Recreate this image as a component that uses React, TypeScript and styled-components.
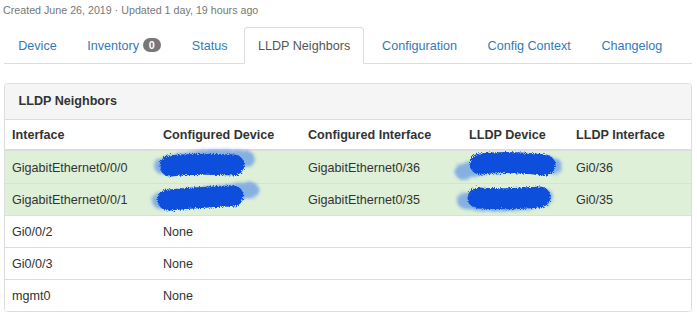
import React, { useId } from 'react';
import styled, { createGlobalStyle } from 'styled-components';

const GlobalStyle = createGlobalStyle`
  body {
    margin: 0;
    background: #fff;
    color: #333;
    font-family: "Liberation Sans", Arial, Helvetica, sans-serif;
    font-size: 12.6px;
  }
`;

const Page = styled.div`
  padding: 2.5px 5px 0 4px;
`;

const Meta = styled.div`
  font-size: 10.7px;
  line-height: 15px;
  color: #777;
  margin: 0 0 9.5px -1px;
`;

const Tabs = styled.ul`
  display: flex;
  list-style: none;
  margin: 0;
  padding: 0;
  border-bottom: 1px solid #ddd;
`;

const TabItem = styled.li`
  margin-bottom: -1px;
`;

const TabLink = styled.a<{ $active?: boolean }>`
  display: block;
  padding: 8.5px 13.2px;
  margin-right: ${p => (p.$active ? '3.5px' : '2.2px')};
  line-height: 18px;
  border: 1px solid transparent;
  border-radius: 3.6px 3.6px 0 0;
  text-decoration: none;
  cursor: pointer;
  color: ${p => (p.$active ? '#555' : '#337ab7')};
  background: ${p => (p.$active ? '#fff' : 'transparent')};
  border-color: ${p => (p.$active ? '#ddd #ddd transparent' : 'transparent')};
`;

const Badge = styled.span`
  display: inline-block;
  min-width: 6px;
  padding: 1.8px 6.3px;
  font-size: 10.8px;
  font-weight: bold;
  line-height: 1;
  color: #fff;
  text-align: center;
  vertical-align: middle;
  background: #777;
  border-radius: 9px;
  position: relative;
  top: -1px;
`;

const Panel = styled.div`
  margin-top: 18.5px;
  border: 1px solid #ddd;
  border-radius: 3.6px;
  box-shadow: 0 1px 1px rgba(0, 0, 0, 0.05);
  overflow: hidden;
`;

const PanelHeading = styled.div`
  padding: 8.5px 13.5px 9px;
  line-height: 18px;
  font-weight: bold;
  background: #f5f5f5;
  border-bottom: 1px solid #ddd;
`;

const Table = styled.table`
  width: 100%;
  table-layout: fixed;
  border-collapse: separate;
  border-spacing: 0;
  font-size: 12.6px;
`;

const Th = styled.th`
  text-align: left;
  font-weight: bold;
  line-height: 18px;
  padding: 6px 7px 5px;
  border-bottom: 2px solid #ddd;
`;

const Row = styled.tr<{ $success?: boolean }>`
  background: ${p => (p.$success ? '#dff0d8' : '#fff')};

  &:first-child td {
    border-top: 0;
    padding-top: 7.5px;
  }
`;

const Td = styled.td`
  line-height: 18px;
  padding: 6.5px 7px;
  border-top: 1px solid #ddd;
  white-space: nowrap;
`;

const ScribbleSvg = styled.svg`
  display: block;
  margin: -7px 0 -7px -10px;
  overflow: visible;
`;

// redaction marks over hidden device names
const scribbles: Record<string, { core: string; halo: string }> = {
  a: { core: 'M17 14 C40 11 62 12 81 13', halo: 'M9 14 C40 5 70 4 94 7' },
  b: { core: 'M15 16 C40 14 64 12 80 12', halo: 'M7 17 C40 12 70 9 98 6' },
  c: { core: 'M21 12 C44 9 70 11 86 13', halo: 'M4 20 C30 11 70 8 95 14' },
  d: { core: 'M19 14 C46 16 68 14 81 13', halo: 'M6 17 C40 22 70 19 86 13' },
};

function Scribble({ variant }: { variant: keyof typeof scribbles }) {
  const id = useId().replace(/:/g, '');
  const s = scribbles[variant];
  return (
    <ScribbleSvg width="100" height="32" viewBox="0 0 100 32">
      <defs>
        <filter id={`spray${id}`} filterUnits="userSpaceOnUse" x="-10" y="-10" width="120" height="52">
          <feTurbulence type="fractalNoise" baseFrequency="0.8" numOctaves="2" seed="3" />
          <feDisplacementMap in="SourceGraphic" scale="5" />
          <feGaussianBlur stdDeviation="0.7" />
        </filter>
        <filter id={`halo${id}`} filterUnits="userSpaceOnUse" x="-10" y="-10" width="120" height="52">
          <feTurbulence type="fractalNoise" baseFrequency="1.2" numOctaves="1" seed="7" />
          <feDisplacementMap in="SourceGraphic" scale="7" />
          <feGaussianBlur stdDeviation="1.8" />
        </filter>
      </defs>
      <path d={s.halo} stroke="#3d7be8" strokeOpacity="0.55" strokeWidth="16" strokeLinecap="round" fill="none" filter={`url(#halo${id})`} />
      <path d={s.core} stroke="#0a4fdc" strokeWidth="21" strokeLinecap="round" fill="none" filter={`url(#spray${id})`} />
    </ScribbleSvg>
  );
}

const tabs = ['Device', 'Inventory', 'Status', 'LLDP Neighbors', 'Configuration', 'Config Context', 'Changelog'];

type Neighbor = {
  iface: string;
  device?: 'a' | 'b';
  confIface?: string;
  lldpDevice?: 'c' | 'd';
  lldpIface?: string;
};

const neighbors: Neighbor[] = [
  { iface: 'GigabitEthernet0/0/0', device: 'a', confIface: 'GigabitEthernet0/36', lldpDevice: 'c', lldpIface: 'Gi0/36' },
  { iface: 'GigabitEthernet0/0/1', device: 'b', confIface: 'GigabitEthernet0/35', lldpDevice: 'd', lldpIface: 'Gi0/35' },
  { iface: 'Gi0/0/2' },
  { iface: 'Gi0/0/3' },
  { iface: 'mgmt0' },
];

export default function App() {
  return (
    <Page>
      <GlobalStyle />
      <Meta>Created June 26, 2019 · Updated 1 day, 19 hours ago</Meta>
      <Tabs>
        {tabs.map(t => (
          <TabItem key={t}>
            <TabLink $active={t === 'LLDP Neighbors'}>
              {t}
              {t === 'Inventory' && <> <Badge>0</Badge></>}
            </TabLink>
          </TabItem>
        ))}
      </Tabs>
      <Panel>
        <PanelHeading>LLDP Neighbors</PanelHeading>
        <Table>
          <colgroup>
            <col style={{ width: 151 }} />
            <col style={{ width: 145 }} />
            <col style={{ width: 161 }} />
            <col style={{ width: 107 }} />
            <col />
          </colgroup>
          <thead>
            <tr>
              <Th>Interface</Th>
              <Th>Configured Device</Th>
              <Th>Configured Interface</Th>
              <Th>LLDP Device</Th>
              <Th>LLDP Interface</Th>
            </tr>
          </thead>
          <tbody>
            {neighbors.map(n => (
              <Row key={n.iface} $success={!!n.device}>
                <Td>{n.iface}</Td>
                <Td>{n.device ? <Scribble variant={n.device} /> : 'None'}</Td>
                <Td>{n.confIface}</Td>
                <Td>{n.lldpDevice && <Scribble variant={n.lldpDevice} />}</Td>
                <Td>{n.lldpIface}</Td>
              </Row>
            ))}
          </tbody>
        </Table>
      </Panel>
    </Page>
  );
}
